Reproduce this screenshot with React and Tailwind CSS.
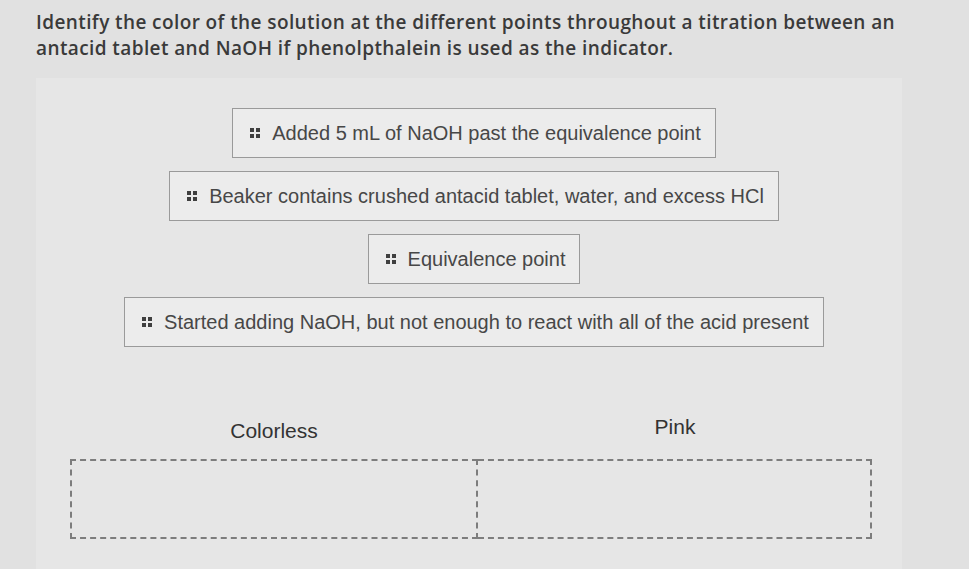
import React from "react";

function Grip() {
  return (
    <span className="grid grid-cols-2 gap-[2px] mr-[12px] shrink-0">
      <span className="w-[4px] h-[4px] bg-[#3f3f3f]" />
      <span className="w-[4px] h-[4px] bg-[#3f3f3f]" />
      <span className="w-[4px] h-[4px] bg-[#3f3f3f]" />
      <span className="w-[4px] h-[4px] bg-[#3f3f3f]" />
    </span>
  );
}

function Card({ children }) {
  return (
    <div className="h-[50px] flex items-center pl-[17px] pr-[14px] border border-[#9a9a9a] bg-[#ececec] text-[20px] text-[#474747] whitespace-nowrap">
      <Grip />
      <span>{children}</span>
    </div>
  );
}

export default function App() {
  return (
    <div
      className="w-[969px] h-[569px] bg-[#e1e1e1] overflow-hidden"
      style={{ fontFamily: "'Liberation Sans', Arial, sans-serif" }}
    >
      <div
        className="pl-[36px] pt-[9px] text-[19px] leading-[26px] font-semibold tracking-[0.4px] text-[#3a3a3a]"
        style={{ fontFamily: "'Open Sans', 'DejaVu Sans', sans-serif" }}
      >
        <div>Identify the color of the solution at the different points throughout a titration between an</div>
        <div>antacid tablet and NaOH if phenolpthalein is used as the indicator.</div>
      </div>
      <div className="ml-[36px] w-[866px] mt-[17px] h-[500px] bg-[#e6e6e6] pt-[30px]">
        <div className="flex flex-col items-center gap-[13px] pl-[10px]">
          <Card>Added 5 mL of NaOH past the equivalence point</Card>
          <Card>Beaker contains crushed antacid tablet, water, and excess HCl</Card>
          <Card>Equivalence point</Card>
          <Card>Started adding NaOH, but not enough to react with all of the acid present</Card>
        </div>
        <div className="ml-[34px] w-[802px] mt-[68px] grid grid-cols-[408px_394px]">
          <div className="text-center text-[21px] text-[#333] h-[36px]">Colorless</div>
          <div className="text-center text-[21px] text-[#333] h-[36px] -mt-[4px]">Pink</div>
          <div className="h-[80px] border-2 border-dashed border-[#7d7d7d] mt-[8px]" />
          <div className="h-[80px] border-2 border-l-0 border-dashed border-[#7d7d7d] mt-[8px]" />
        </div>
      </div>
    </div>
  );
}
